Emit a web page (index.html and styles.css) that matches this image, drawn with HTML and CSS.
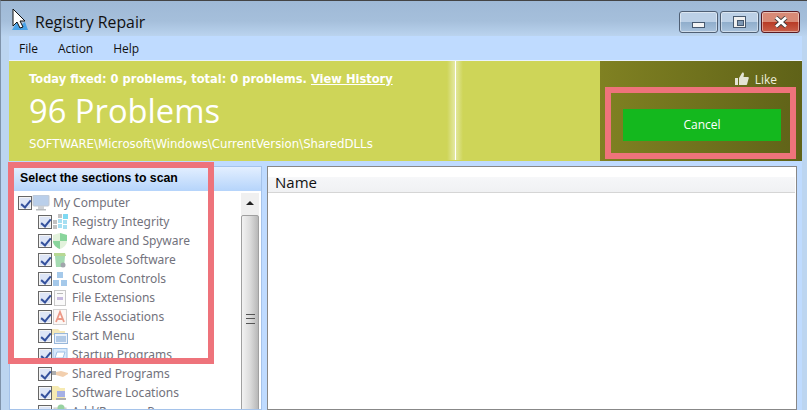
FILE: index.html
```html
<!DOCTYPE html>
<html>
<head>
  <title>Registry Repair</title>
  <link rel="stylesheet" href="styles.css">
</head>
<body>
<div class="window">
  <div class="titlebar">
    <svg class="app-icon" width="20" height="24" viewBox="0 0 20 24">
      <path d="M1 22 L7 12 L10 17 L14 14 L17 22 Z" fill="#4aa3e8"/>
      <path d="M2 1 L2 18 L6 14 L9 20 L12 19 L9 13 L14 13 Z" fill="#fff" stroke="#111" stroke-width="1"/>
    </svg>
    <span class="app-title">Registry Repair</span>
    <div class="win-buttons">
      <div class="win-btn"><span class="glyph-min"></span></div>
      <div class="win-btn"><span class="glyph-max"></span></div>
      <div class="win-btn win-close">
        <svg width="14" height="12" viewBox="0 0 14 12"><path d="M2 1.5 L12 10.5 M12 1.5 L2 10.5" stroke="#3a3a3a" stroke-width="4.4"/><path d="M2 1.5 L12 10.5 M12 1.5 L2 10.5" stroke="#fff" stroke-width="2.8"/></svg>
      </div>
    </div>
  </div>

  <div class="client">
    <div class="menubar">
      <span>File</span><span>Action</span><span>Help</span>
    </div>

    <div class="banner">
      <div class="banner-main">
        <p class="today">Today fixed: 0 problems, total: 0 problems. <u>View History</u></p>
        <p class="count">96 Problems</p>
        <p class="path">SOFTWARE\Microsoft\Windows\CurrentVersion\SharedDLLs</p>
      </div>
      <div class="divider"></div>
      <div class="banner-gap"></div>
      <div class="banner-side">
        <div class="like">
          <svg width="14" height="14" viewBox="0 0 14 14"><path d="M0 6 H3 V13 H0 Z M4 6 L7 1 C8 0 9 1 9 2 L8.5 5 H13 C14 5 14 6.5 13.5 7 L12 12.5 C11.8 13 11 13 10.5 13 H4 Z" fill="#e4e4d4"/></svg>
          <span>Like</span>
        </div>
        <div class="cancel">Cancel</div>
      </div>
    </div>

    <div class="panes">
      <div class="left-pane">
        <div class="pane-head">Select the sections to scan</div>
        <div class="tree-wrap">
          <ul class="tree">
            <li class="root">
              <span class="check"></span>
              <svg class="ico" width="18" height="16" viewBox="0 0 18 16"><rect x="1" y="0" width="16" height="11" rx="1" fill="#a9c4e6" stroke="#b5bcc6"/><rect x="6" y="11" width="6" height="3" fill="#c4c8cc"/><rect x="4" y="14" width="10" height="1.5" fill="#a8acb0"/></svg>
              <span>My Computer</span>
            </li>
            <li>
              <span class="check"></span>
              <svg class="ico" width="16" height="16" viewBox="0 0 16 16"><g fill="#8fd8f0"><rect x="6" y="5" width="4" height="4"/><rect x="11" y="0" width="5" height="5" fill="#5fd0f0"/><rect x="6" y="10" width="4" height="4"/><rect x="11" y="6" width="4" height="4"/><rect x="11" y="11" width="4" height="4"/></g><g fill="#b4b4b4"><rect x="1" y="6" width="4" height="4"/><rect x="1" y="11" width="4" height="4"/><rect x="6" y="0" width="4" height="4"/></g></svg>
              <span>Registry Integrity</span>
            </li>
            <li>
              <span class="check"></span>
              <svg class="ico" width="16" height="16" viewBox="0 0 16 16"><path d="M8 0 L15 2 V8 C15 12 11 15 8 16 C5 15 1 12 1 8 V2 Z" fill="#dcefd4"/><path d="M8 0 L15 2 V8 H8 Z M8 8 V16 C5 15 1 12 1 8 Z" fill="#6ccb84"/></svg>
              <span>Adware and Spyware</span>
            </li>
            <li>
              <span class="check"></span>
              <svg class="ico" width="16" height="16" viewBox="0 0 16 16"><path d="M2 1 H13 L14 4 H2 Z" fill="#a6cf7a"/><path d="M3 4 H13 L12 15 H4 Z" fill="#8fd3a0"/><circle cx="11" cy="13" r="2.5" fill="#8a8f98"/></svg>
              <span>Obsolete Software</span>
            </li>
            <li>
              <span class="check"></span>
              <svg class="ico" width="16" height="16" viewBox="0 0 16 16"><g fill="#8fbce6"><rect x="5" y="1" width="6" height="6"/><rect x="1" y="9" width="6" height="6"/><rect x="9" y="9" width="6" height="6"/></g></svg>
              <span>Custom Controls</span>
            </li>
            <li>
              <span class="check"></span>
              <svg class="ico" width="16" height="16" viewBox="0 0 16 16"><rect x="2.5" y="0.5" width="11" height="15" fill="#fafafa" stroke="#bbb"/><rect x="5" y="3" width="6" height="1" fill="#aaa"/><rect x="5" y="7" width="6" height="3" fill="#b8a8d8"/></svg>
              <span>File Extensions</span>
            </li>
            <li>
              <span class="check"></span>
              <svg class="ico" width="16" height="16" viewBox="0 0 16 16"><rect x="1.5" y="0.5" width="13" height="15" fill="#fdf6f2" stroke="#c8c8c8"/><path d="M4 13 L8 3 L12 13 M5.5 10 H10.5" fill="none" stroke="#e8806a" stroke-width="1.8"/></svg>
              <span>File Associations</span>
            </li>
            <li>
              <span class="check"></span>
              <svg class="ico" width="16" height="16" viewBox="0 0 16 16"><path d="M0 1 H6 L8 3 H13 V7 H0 Z" fill="#f2e3a8"/><rect x="2.5" y="5.5" width="13" height="10" fill="#e8f0fa" stroke="#7fa6d2"/><rect x="4" y="8" width="10" height="6" fill="#9dbce0"/></svg>
              <span>Start Menu</span>
            </li>
            <li>
              <span class="check"></span>
              <svg class="ico" width="16" height="16" viewBox="0 0 16 16"><rect x="1" y="1.5" width="14" height="12" fill="#cfe4fa" stroke="#86b2e2"/><path d="M5 5 H13 L11 11 H3 Z" fill="#fff" stroke="#86b2e2"/></svg>
              <span>Startup Programs</span>
            </li>
            <li>
              <span class="check"></span>
              <svg class="ico" width="16" height="16" viewBox="0 0 16 16"><rect x="0" y="5" width="4" height="4" fill="#9a9a9a"/><path d="M4 6 L9 5 L16 7 V8 L11 11 L4 9 Z" fill="#f0c49a"/></svg>
              <span>Shared Programs</span>
            </li>
            <li>
              <span class="check"></span>
              <svg class="ico" width="16" height="16" viewBox="0 0 16 16"><path d="M0 1 H6 L8 3 H13 V15 H0 Z" fill="#f4e6a0"/><rect x="5" y="6" width="8" height="6" fill="#8f9de0"/><rect x="4" y="13" width="10" height="2" fill="#9a9a9a"/></svg>
              <span>Software Locations</span>
            </li>
            <li>
              <span class="check"></span>
              <svg class="ico" width="16" height="16" viewBox="0 0 16 16"><rect x="2" y="4" width="12" height="11" fill="#e6e0c8" stroke="#bbb"/><circle cx="9" cy="4" r="3.5" fill="#7fc78a"/></svg>
              <span>Add/Remove Programs</span>
            </li>
          </ul>
          <div class="scrollbar">
            <div class="sb-up"><span class="sb-arrow"></span></div>
            <div class="sb-thumb"><span class="sb-grip"></span></div>
          </div>
        </div>
      </div>

      <div class="right-pane">
        <div class="list-head">Name</div>
      </div>
    </div>
  </div>
</div>

<div class="mark mark-cancel"></div>
<div class="mark mark-tree"></div>
</body>
</html>
```

FILE: styles.css
```css
* {box-sizing: border-box}
html, body {
  margin: 0;
  height: 410px;
  overflow: hidden;
}
body {
  background: #fff;
  font-family: "DejaVu Sans", sans-serif;
  position: relative;
}
p {margin: 0}

.window {
  height: 410px;
  border-top: 1px solid #444;
  border-left: 1px solid #7f93aa;
  padding-top: 1px;
  background: linear-gradient(#9fb9d6, #a5bfdb 20px, #bcd5f0 36px);
  display: flex;
  flex-direction: column;
}
.titlebar {
  height: 34px;
  flex: none;
  display: flex;
  align-items: center;
  padding-left: 10px;
  position: relative;
}
.app-icon {margin-top: 2px}
.app-title {
  font-family: "Open Sans", sans-serif;
  font-size: 15.8px;
  color: #111;
  margin-left: 4px;
  margin-top: 5px;
}
.win-buttons {
  margin-left: auto;
  margin-right: 7px;
  margin-top: 6px;
  display: flex;
  gap: 2px;
}
.win-btn {
  width: 39px;
  height: 22px;
  border: 1px solid #4f5f74;
  border-radius: 3px;
  background: linear-gradient(#bcd0e6 50%, #8fadcb 50%, #a9c2dc);
  box-shadow: inset 0 0 0 1px rgba(255,255,255,0.45);
  display: flex;
  align-items: center;
  justify-content: center;
}
.win-close {
  border-color: #5a1a22;
  background: linear-gradient(#d88a76 50%, #b83a25 50%, #c9604a);
}
.glyph-min {
  width: 13px;
  height: 6px;
  margin-top: 5px;
  background: #f4f4f4;
  border: 1px solid #46586e;
}
.glyph-max {
  width: 13px;
  height: 12px;
  background: #f0f0f0;
  border: 1px solid #46586e;
  position: relative;
}
.glyph-max::after {
  content: "";
  display: block;
  width: 5px;
  height: 4px;
  margin: 3px;
  background: #7d97b4;
  border: 1px solid #46586e;
}

.client {
  flex: 1;
  margin: 0 5px 0 8px;
  background: #bfdbff;
  display: flex;
  flex-direction: column;
  min-height: 0;
}
.menubar {
  height: 25px;
  flex: none;
  display: flex;
  align-items: center;
  gap: 20px;
  padding-left: 10px;
  font-family: "Open Sans", sans-serif;
  font-size: 12px;
  color: #111;
  border-bottom: 1px solid #eaf3ff;
}

.banner {
  height: 100px;
  flex: none;
  display: flex;
  background: #ced558;
  color: #fff;
}
.banner-main {
  width: 438px;
  padding: 9px 0 0 20px;
  flex: none;
}
.today {
  font-family: "DejaVu Sans", sans-serif;
  font-weight: bold;
  font-size: 11.46px;
  line-height: 18px;
  white-space: nowrap;
}
.count {
  font-family: "Open Sans", sans-serif;
  font-size: 32.7px;
  line-height: 44px;
  margin-top: 1px;
}
.path {
  font-size: 11.75px;
  line-height: 16px;
  margin-top: 3px;
  white-space: nowrap;
}
.divider {
  width: 16px;
  flex: none;
  background: linear-gradient(90deg, #ced558, #e4e8a4 50%, #ced558);
  height: 99px;
}
.divider::after {
  content: "";
  display: block;
  width: 1px;
  height: 100%;
  margin-left: 8px;
  background: #fff;
}
.banner-gap {width: 137px; flex: none}
.banner-side {
  flex: 1;
  background: linear-gradient(90deg, #808122, #5f6218);
  padding-top: 10px;
}
.like {
  display: flex;
  justify-content: flex-end;
  align-items: center;
  gap: 6px;
  padding-right: 25px;
  font-family: "Open Sans", sans-serif;
  font-size: 12px;
  color: #eeeedd;
  height: 16px;
}
.cancel {
  width: 158px;
  height: 32px;
  margin: 22px 0 0 23px;
  background: #14b81e;
  color: #fff;
  font-family: "Open Sans", sans-serif;
  font-size: 12px;
  line-height: 32px;
  text-align: center;
}

.panes {
  flex: 1;
  display: flex;
  gap: 5px;
  padding: 5px 5px 0 0;
  min-height: 0;
}
.left-pane {
  width: 253px;
  flex: none;
  background: #fff;
  border: 1px solid #a5c3ea;
  display: flex;
  flex-direction: column;
  overflow: hidden;
}
.pane-head {
  height: 24px;
  flex: none;
  background: linear-gradient(#e3efff, #b5d4fb);
  font-family: "Liberation Sans", sans-serif;
  font-weight: bold;
  font-size: 12.3px;
  line-height: 23px;
  padding-left: 10px;
  color: #000;
}
.tree-wrap {
  flex: 1;
  display: flex;
  min-height: 0;
}
.tree {
  list-style: none;
  margin: 0;
  padding: 2px 0 0 8px;
  flex: 1;
  font-size: 12px;
  color: #72727c;
  font-family: "Noto Sans", sans-serif;
}
.tree li {
  height: 19px;
  display: flex;
  align-items: center;
  padding-left: 20px;
  white-space: nowrap;
}
.tree li.root {padding-left: 0}
.check {
  width: 14px;
  height: 14px;
  flex: none;
  border: 1px solid #666;
  background: #dde5f6;
  box-shadow: inset 0 0 0 1px #f4f4f4;
  position: relative;
}
.check::after {
  content: "";
  position: absolute;
  left: 3.5px;
  top: 1px;
  width: 4px;
  height: 8px;
  border: solid #33509c;
  border-width: 0 2px 2px 0;
  transform: rotate(40deg);
}
.ico {margin: 0 4px 0 0; flex: none; opacity: 0.8}
.root .ico {margin-right: 3px}

.scrollbar {
  width: 18px;
  flex: none;
  margin: 2px 2px 0 0;
  background: #f0f0f0;
}
.sb-up {
  height: 20px;
  display: flex;
  align-items: center;
  justify-content: center;
}
.sb-arrow {
  border: 4px solid transparent;
  border-top: 0;
  border-bottom: 4px solid #222;
}
.sb-thumb {
  height: 300px;
  margin-top: 2px;
  border: 1px solid #a0a0a0;
  border-radius: 2px;
  background: linear-gradient(90deg, #f2f2f2, #dcdcdc 50%, #b8b8b8);
  padding-top: 98px;
}
.sb-grip {
  display: block;
  width: 9px;
  height: 10px;
  margin: 0 auto;
  border-top: 1px solid #555;
  border-bottom: 1px solid #555;
}
.sb-grip::after {
  content: "";
  display: block;
  height: 1px;
  margin-top: 3px;
  background: #555;
}

.right-pane {
  flex: 1;
  background: #fff;
  border: 1px solid #888;
  overflow: hidden;
}
.list-head {
  height: 26px;
  background: linear-gradient(#fff 10px, #f6f7f9 10px, #f0f1f3);
  border-bottom: 1px solid #d5d5d5;
  margin-right: 1px;
  font-family: "Open Sans", sans-serif;
  font-size: 15px;
  line-height: 16px;
  padding: 7px 0 0 7px;
  color: #111;
}

.mark {
  position: absolute;
  border: 6px solid #ee737b;
}
.mark-cancel {left: 605px; top: 87px; width: 191px; height: 72px}
.mark-tree {left: 8px; top: 162px; width: 206px; height: 202px}
```
